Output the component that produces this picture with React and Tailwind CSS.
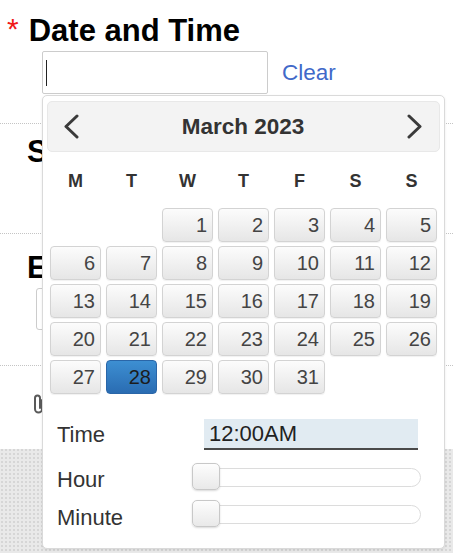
import React from "react";

const F = { fontFamily: '"Liberation Sans", Arial, sans-serif' };

function Chevron({ dir }) {
  const pts = dir === "left" ? "14,2 3,12.5 14,23" : "3,2 14,12.5 3,23";
  return (
    <svg width="17" height="25" viewBox="0 0 17 25">
      <polyline points={pts} fill="none" stroke="#3a3a3a" strokeWidth="3" strokeLinecap="round" strokeLinejoin="round" />
    </svg>
  );
}

function Slider() {
  return (
    <div className="relative w-[229px] h-[27px]">
      <div className="mt-[5px] h-[19px] rounded-full border border-[#dcdcdc] bg-white" />
      <div className="absolute left-0 top-0 w-[28px] h-[27px] rounded-[5px] border border-[#c8c8c8] bg-gradient-to-b from-[#fdfdfd] to-[#e9e9e9] shadow-[0_1px_2px_rgba(0,0,0,0.15)]" />
    </div>
  );
}

export default function App() {
  const days = [];
  for (let i = 0; i < 2; i++) days.push(null);
  for (let d = 1; d <= 31; d++) days.push(d);
  const names = ["M", "T", "W", "T", "F", "S", "S"];

  return (
    <div style={F} className="relative w-[453px] h-[553px] overflow-hidden bg-[#e9e9e9] bg-[radial-gradient(#d6d6d6_1px,transparent_1px)] bg-[length:4px_4px]">
      <div className="bg-white h-[449px] flex flex-col">
        <div className="pt-[13px] pl-[7px] flex items-baseline h-[49px]">
          <span className="text-[30px] leading-[36px] text-[#f01818] relative -top-[2px]">*</span>
          <span className="ml-[10px] text-[31px] leading-[36px] font-bold text-black">Date and Time</span>
        </div>
        <div className="mt-[2px] ml-[42px] flex items-center">
          <div className="w-[226px] h-[43px] border border-[#cccccc] rounded-[2px] flex items-center pl-[3px]">
            <div className="w-px h-[26px] bg-[#222]" />
          </div>
          <span className="ml-[14px] text-[22.5px] text-[#4169c9]">Clear</span>
        </div>
        <div className="mt-[29px] border-t border-dotted border-[#c4c4c4]" />
        <div className="mt-[10px] pl-[27px] text-[31px] leading-[36px] font-bold text-black">Subject</div>
        <div className="mt-[63px] border-t border-dotted border-[#c4c4c4]" />
        <div className="mt-[16px] pl-[27px] text-[31px] leading-[36px] font-bold text-black">End</div>
        <div className="mt-[2px] ml-[36px] w-[200px] h-[42px] border border-[#cccccc] rounded-[3px]" />
        <div className="mt-[35px] border-t border-dotted border-[#c4c4c4]" />
        <div className="mt-[28px] ml-[32px] text-[#555]">
          <svg width="14" height="20" viewBox="0 0 14 20" fill="none" stroke="#5a5a5a" strokeWidth="2" strokeLinecap="round">
            <path d="M10 6 L10 15 A3.5 3.5 0 0 1 3 15 L3 4 A2.5 2.5 0 0 1 8 4 L8 14" />
          </svg>
        </div>
      </div>

      <div className="absolute left-[42px] top-[95px] w-[403px] h-[454px] bg-white border border-[#dadada] rounded-[5px] pt-[5px] px-[4px] shadow-[0_1px_3px_rgba(0,0,0,0.08)]">
        <div className="h-[51px] bg-[#f3f3f3] border border-[#e8e8e8] rounded-[5px] flex items-center justify-between pl-[15px] pr-[16px]">
          <Chevron dir="left" />
          <span className="text-[22.5px] font-bold text-[#333]">March 2023</span>
          <Chevron dir="right" />
        </div>
        <div className="mt-[14px] pl-[3px] grid grid-cols-[repeat(7,51px)] gap-x-[5px] h-[30px] items-center">
          {names.map((n, i) => (
            <div key={i} className="text-center text-[18px] font-bold text-[#333]">{n}</div>
          ))}
        </div>
        <div className="mt-[12px] pl-[3px] grid grid-cols-[repeat(7,51px)] gap-x-[5px] gap-y-[4px]">
          {days.map((d, i) =>
            d === null ? (
              <div key={i} className="h-[34px]" />
            ) : d === 28 ? (
              <div key={i} className="h-[34px] rounded-[4px] border border-[#2a66a8] bg-gradient-to-b from-[#3d8fd2] to-[#2a6cb2] flex items-center justify-end pr-[5px] text-[20px] text-[#1c1c1c]">
                {d}
              </div>
            ) : (
              <div key={i} className="h-[34px] rounded-[4px] border border-[#d3d3d3] bg-gradient-to-b from-[#fcfcfc] to-[#e6e6e6] shadow-[0_1px_1px_rgba(0,0,0,0.06)] flex items-center justify-end pr-[5px] text-[20px] text-[#444]">
                {d}
              </div>
            )
          )}
        </div>
        <div className="mt-[25px] pl-[10px] flex flex-col">
          <div className="flex items-center h-[31px]">
            <span className="w-[135px] text-[22px] text-[#333]">Time</span>
            <div className="ml-[12px] w-[214px] h-[31px] bg-[#e1ebf2] border-b-2 border-[#4a4a4a] flex items-center pl-[5px] text-[22px] text-[#222]">
              12:00AM
            </div>
          </div>
          <div className="mt-[13px] flex items-center h-[27px]">
            <span className="w-[135px] text-[22px] text-[#333] pt-[6px]">Hour</span>
            <Slider />
          </div>
          <div className="mt-[10px] flex items-center h-[27px]">
            <span className="w-[135px] text-[22px] text-[#333] pt-[8px]">Minute</span>
            <Slider />
          </div>
        </div>
      </div>
    </div>
  );
}
